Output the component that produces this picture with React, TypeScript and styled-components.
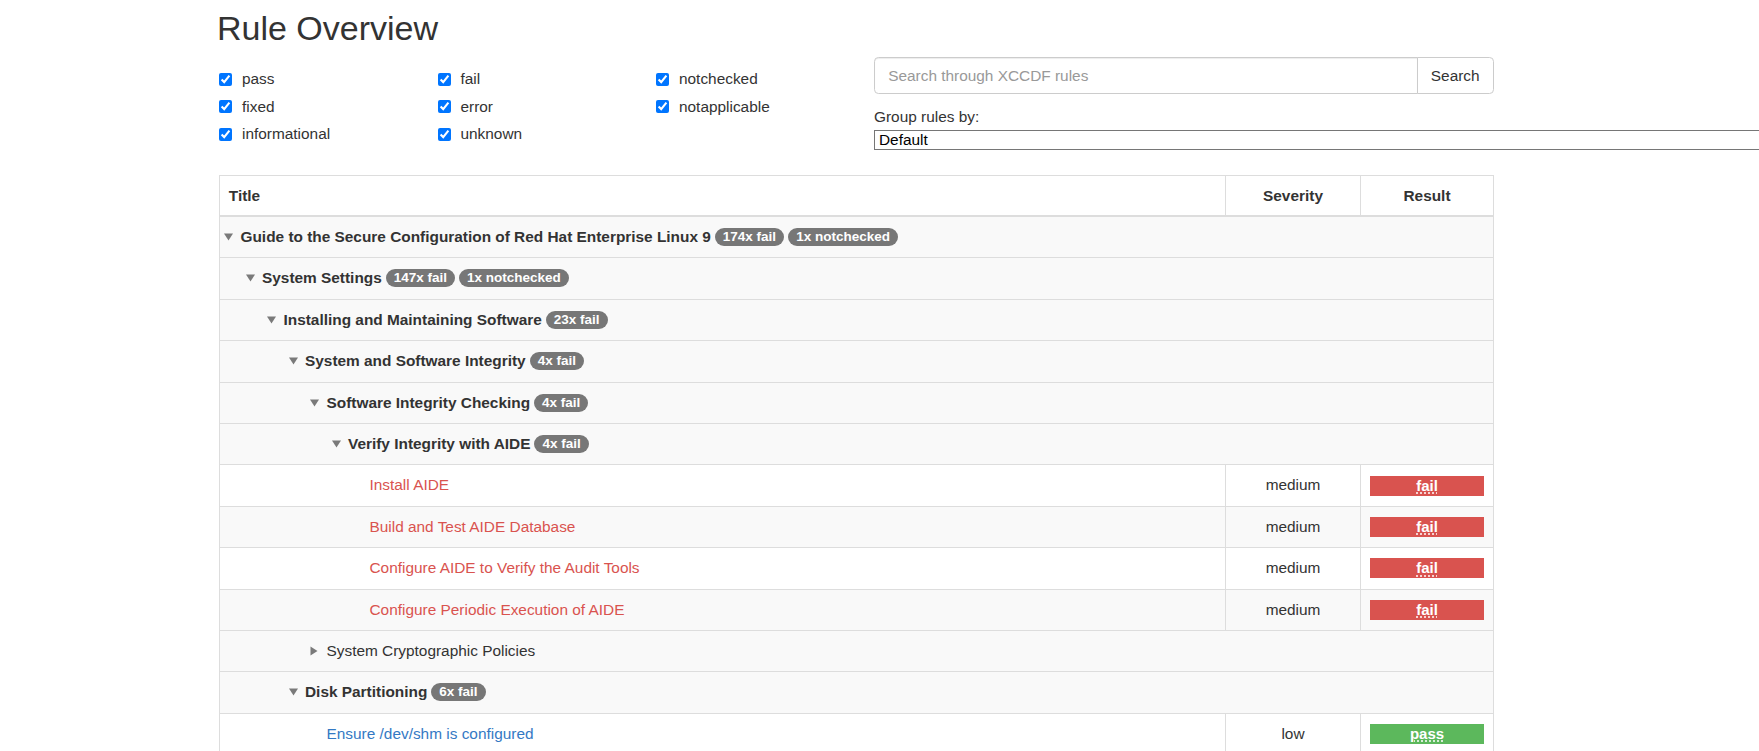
import React from "react";
import styled, { createGlobalStyle } from "styled-components";

const GlobalStyle = createGlobalStyle`
  html, body {
    margin: 0;
    padding: 0;
    overflow: hidden;
    background: #fff;
  }
  body {
    font-family: "Liberation Sans", Arial, Helvetica, sans-serif;
    font-size: 15.4px;
    line-height: 22px;
    color: #333;
  }
  * { box-sizing: border-box; }
`;

type Row =
  | { kind: "group"; level: number; title: string; badges?: string[]; open: boolean; bold: boolean }
  | { kind: "rule"; level: number; title: string; severity: string; result: "fail" | "pass"; shade: boolean };

const filters = [
  ["pass", "fixed", "informational"],
  ["fail", "error", "unknown"],
  ["notchecked", "notapplicable"],
];

const rows: Row[] = [
  { kind: "group", level: 0, title: "Guide to the Secure Configuration of Red Hat Enterprise Linux 9", badges: ["174x fail", "1x notchecked"], open: true, bold: true },
  { kind: "group", level: 1, title: "System Settings", badges: ["147x fail", "1x notchecked"], open: true, bold: true },
  { kind: "group", level: 2, title: "Installing and Maintaining Software", badges: ["23x fail"], open: true, bold: true },
  { kind: "group", level: 3, title: "System and Software Integrity", badges: ["4x fail"], open: true, bold: true },
  { kind: "group", level: 4, title: "Software Integrity Checking", badges: ["4x fail"], open: true, bold: true },
  { kind: "group", level: 5, title: "Verify Integrity with AIDE", badges: ["4x fail"], open: true, bold: true },
  { kind: "rule", level: 6, title: "Install AIDE", severity: "medium", result: "fail", shade: false },
  { kind: "rule", level: 6, title: "Build and Test AIDE Database", severity: "medium", result: "fail", shade: true },
  { kind: "rule", level: 6, title: "Configure AIDE to Verify the Audit Tools", severity: "medium", result: "fail", shade: false },
  { kind: "rule", level: 6, title: "Configure Periodic Execution of AIDE", severity: "medium", result: "fail", shade: true },
  { kind: "group", level: 4, title: "System Cryptographic Policies", open: false, bold: false },
  { kind: "group", level: 3, title: "Disk Partitioning", badges: ["6x fail"], open: true, bold: true },
  { kind: "rule", level: 4, title: "Ensure /dev/shm is configured", severity: "low", result: "pass", shade: false },
];

const INDENT = 21.5;

const Page = styled.div`
  width: 1275px;
  margin-left: 219px;
  padding-top: 9px;
`;

const Heading = styled.h1`
  margin: 0 0 0 -2px;
  font-size: 34px;
  line-height: 38px;
  font-weight: 500;
  color: #333;
`;

const TopRow = styled.div`
  display: grid;
  grid-template-columns: 655px 620px;
  margin-top: 10px;
`;

const Filters = styled.div`
  display: grid;
  grid-template-columns: repeat(3, 218.5px);
  padding-top: 11px;
`;

const FilterColumn = styled.div`
  display: flex;
  flex-direction: column;
  gap: 5.5px;
`;

const FilterLabel = styled.label`
  display: flex;
  align-items: center;
  gap: 10px;
  height: 22px;
  font-size: 15.4px;
  color: #333;
`;

const Check = styled.input`
  width: 13px;
  height: 13px;
  margin: 0;
  accent-color: #0075ff;
`;

const SearchArea = styled.div`
  display: flex;
  flex-direction: column;
`;

const InputGroup = styled.div`
  display: flex;
  height: 37.4px;
`;

const SearchInput = styled.input`
  flex: 1;
  height: 100%;
  border: 1px solid #ccc;
  border-radius: 4.4px 0 0 4.4px;
  padding: 6px 13.2px;
  font-family: inherit;
  font-size: 15.4px;
  color: #555;
  box-shadow: inset 0 1px 1px rgba(0, 0, 0, 0.075);
  &::placeholder { color: #999; }
`;

const SearchButton = styled.button`
  width: 77.5px;
  height: 100%;
  margin-left: -1px;
  border: 1px solid #ccc;
  border-radius: 0 4.4px 4.4px 0;
  background: #fff;
  font-family: inherit;
  font-size: 15.4px;
  color: #333;
`;

const GroupLabel = styled.div`
  margin-top: 12px;
  line-height: 22px;
  color: #333;
`;

const GroupSelect = styled.select`
  appearance: none;
  width: 1000px;
  height: 20px;
  margin-top: 2px;
  padding: 0 4px;
  border: 1px solid #767676;
  border-radius: 0;
  background: #fff;
  font-family: inherit;
  font-size: 15.4px;
  line-height: 18px;
  color: #000;
`;

const Table = styled.table`
  width: 1275px;
  margin-top: 25px;
  border-collapse: collapse;
  border: 1px solid #ddd;
`;

const Th = styled.th<{ $align: "left" | "center"; $w?: number }>`
  padding: 8.3px 8.8px;
  line-height: 22px;
  text-align: ${(p) => p.$align};
  width: ${(p) => (p.$w ? `${p.$w}px` : "auto")};
  border: 1px solid #ddd;
  border-bottom-width: 2px;
  font-weight: bold;
  color: #333;
`;

const Tr = styled.tr<{ $shade: boolean }>`
  background: ${(p) => (p.$shade ? "#f9f9f9" : "#fff")};
`;

const Td = styled.td<{ $center?: boolean }>`
  padding: 9px 8.8px;
  line-height: 22.4px;
  border: 1px solid #ddd;
  text-align: ${(p) => (p.$center ? "center" : "left")};
  vertical-align: middle;
`;

const TitleCell = styled(Td)<{ $level: number }>`
  padding-left: ${(p) => 4 + p.$level * INDENT}px;
`;

const Expander = styled.span`
  display: inline-flex;
  width: 16.5px;
  vertical-align: middle;
  position: relative;
  top: -1px;
`;

const GroupTitle = styled.span<{ $bold: boolean }>`
  font-weight: ${(p) => (p.$bold ? "bold" : "normal")};
  color: #333;
`;

const CountBadge = styled.span`
  display: inline-block;
  margin-left: 4px;
  padding: 2px 8px;
  border-radius: 9px;
  background: #777;
  color: #fff;
  font-size: 13.5px;
  font-weight: bold;
  line-height: 14px;
  vertical-align: 1px;
  white-space: nowrap;
`;

const RuleLink = styled.a<{ $result: "fail" | "pass" }>`
  display: inline-block;
  margin-left: 16.5px;
  text-decoration: none;
  color: ${(p) => (p.$result === "fail" ? "#d9534f" : "#3479c4")};
`;

const ResultLabel = styled.div<{ $result: "fail" | "pass" }>`
  height: 20px;
  line-height: 20px;
  text-align: center;
  background: ${(p) => (p.$result === "fail" ? "#d9534f" : "#5cb85c")};
  color: #fff;
  font-weight: bold;
  font-size: 15px;
  abbr {
    text-decoration: underline dotted;
    text-underline-offset: 2px;
  }
`;

const Caret = ({ open }: { open: boolean }) =>
  open ? (
    <svg width="9" height="8" viewBox="0 0 9 8">
      <path d="M0 0.5 L9 0.5 L4.5 7.5 Z" fill="#7a7a7a" />
    </svg>
  ) : (
    <svg width="8" height="10" viewBox="0 0 8 10">
      <path d="M0.5 0.5 L7.5 5 L0.5 9.5 Z" fill="#7a7a7a" />
    </svg>
  );

export default function App() {
  return (
    <>
      <GlobalStyle />
      <Page>
        <Heading>Rule Overview</Heading>
        <TopRow>
          <Filters>
            {filters.map((col, i) => (
              <FilterColumn key={i}>
                {col.map((name) => (
                  <FilterLabel key={name}>
                    <Check type="checkbox" defaultChecked />
                    {name}
                  </FilterLabel>
                ))}
              </FilterColumn>
            ))}
          </Filters>
          <SearchArea>
            <InputGroup>
              <SearchInput placeholder="Search through XCCDF rules" />
              <SearchButton>Search</SearchButton>
            </InputGroup>
            <GroupLabel>Group rules by:</GroupLabel>
            <GroupSelect defaultValue="default">
              <option value="default">Default</option>
            </GroupSelect>
          </SearchArea>
        </TopRow>
        <Table>
          <thead>
            <tr>
              <Th $align="left">Title</Th>
              <Th $align="center" $w={135}>Severity</Th>
              <Th $align="center" $w={133}>Result</Th>
            </tr>
          </thead>
          <tbody>
            {rows.map((r, i) =>
              r.kind === "group" ? (
                <Tr key={i} $shade>
                  <TitleCell colSpan={3} $level={r.level}>
                    <Expander>
                      <Caret open={r.open} />
                    </Expander>
                    <GroupTitle $bold={r.bold}>{r.title}</GroupTitle>
                    {r.badges?.map((b) => (
                      <CountBadge key={b}>{b}</CountBadge>
                    ))}
                  </TitleCell>
                </Tr>
              ) : (
                <Tr key={i} $shade={r.shade}>
                  <TitleCell $level={r.level}>
                    <RuleLink href="#" $result={r.result}>{r.title}</RuleLink>
                  </TitleCell>
                  <Td $center>{r.severity}</Td>
                  <Td>
                    <ResultLabel $result={r.result}>
                      <abbr>{r.result}</abbr>
                    </ResultLabel>
                  </Td>
                </Tr>
              )
            )}
          </tbody>
        </Table>
      </Page>
    </>
  );
}
